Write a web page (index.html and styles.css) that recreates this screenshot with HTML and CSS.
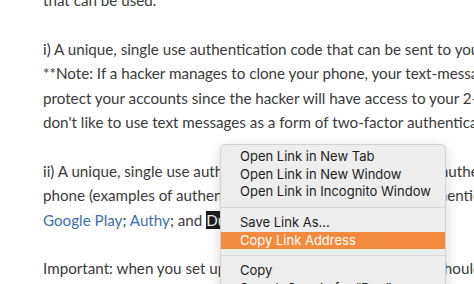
FILE: index.html
```html
<!DOCTYPE html>
<html>
<head>
<meta charset="utf-8">
<link rel="stylesheet" href="styles.css">
</head>
<body>
<div class="page">
  <div class="article">
    <p class="para">
      <span class="line">that can be used.</span>
    </p>
    <p class="para">
      <span class="line">i) A unique, single use authentication code that can be sent to your phone</span>
      <span class="line">**Note: If a hacker manages to clone your phone, your text-messages won't</span>
      <span class="line">protect your accounts since the hacker will have access to your 2-factor</span>
      <span class="line">don't like to use text messages as a form of two-factor authentication.</span>
    </p>
    <p class="para">
      <span class="line">ii) A unique, single use authentication code generated by an authenticator app</span>
      <span class="line">phone (examples of authentication apps include Google Authenticator</span>
      <span class="line"><a class="link">Google Play</a>; <a class="link">Authy</a>; and <a class="link selected">Duo Mobile</a>).</span>
    </p>
    <p class="para">
      <span class="line">Important: when you set up two-factor authentication, you should</span>
    </p>
  </div>
</div>
<div class="menu">
  <div class="item">Open Link in New Tab</div>
  <div class="item">Open Link in New Window</div>
  <div class="item">Open Link in Incognito Window</div>
  <div class="sep"></div>
  <div class="item">Save Link As...</div>
  <div class="item active">Copy Link Address</div>
  <div class="sep"></div>
  <div class="item">Copy</div>
  <div class="item">Search Google for “Duo”</div>
</div>
</body>
</html>
```
FILE: styles.css
```css
html, body {
  margin: 0;
  padding: 0;
  background: #ffffff;
  overflow: hidden;
  width: 474px;
  height: 284px;
}
.page {
  padding-left: 43px;
  margin-top: -12px;
}
.article {
  font-family: Lato, "Noto Sans", sans-serif;
  font-size: 15.2px;
  line-height: 24.4px;
  color: #3a3a3a;
}
.para {
  margin: 0 0 24.4px 0;
}
.line {
  display: block;
  white-space: nowrap;
}
.link {
  color: #3d6fae;
  text-decoration: none;
}
.selected {
  background: #1d1d1d;
  color: #f2f2f2;
}
.menu {
  position: absolute;
  left: 220px;
  top: 144px;
  width: 226px;
  box-sizing: border-box;
  padding: 3px 0;
  background: #ededed;
  border: 1px solid #d2d2d2;
  border-radius: 5px;
  box-shadow: 0 4px 14px rgba(0, 0, 0, 0.16);
  font-family: Inter, "Liberation Sans", sans-serif;
  font-size: 13px;
  color: #1c1c1c;
}
.item {
  height: 17.7px;
  line-height: 17.7px;
  padding-left: 19px;
  white-space: nowrap;
}
.active {
  background: #f48a3d;
  color: #ffffff;
}
.sep {
  height: 1px;
  background: #d6d6d6;
  margin: 6px 0;
}
```
